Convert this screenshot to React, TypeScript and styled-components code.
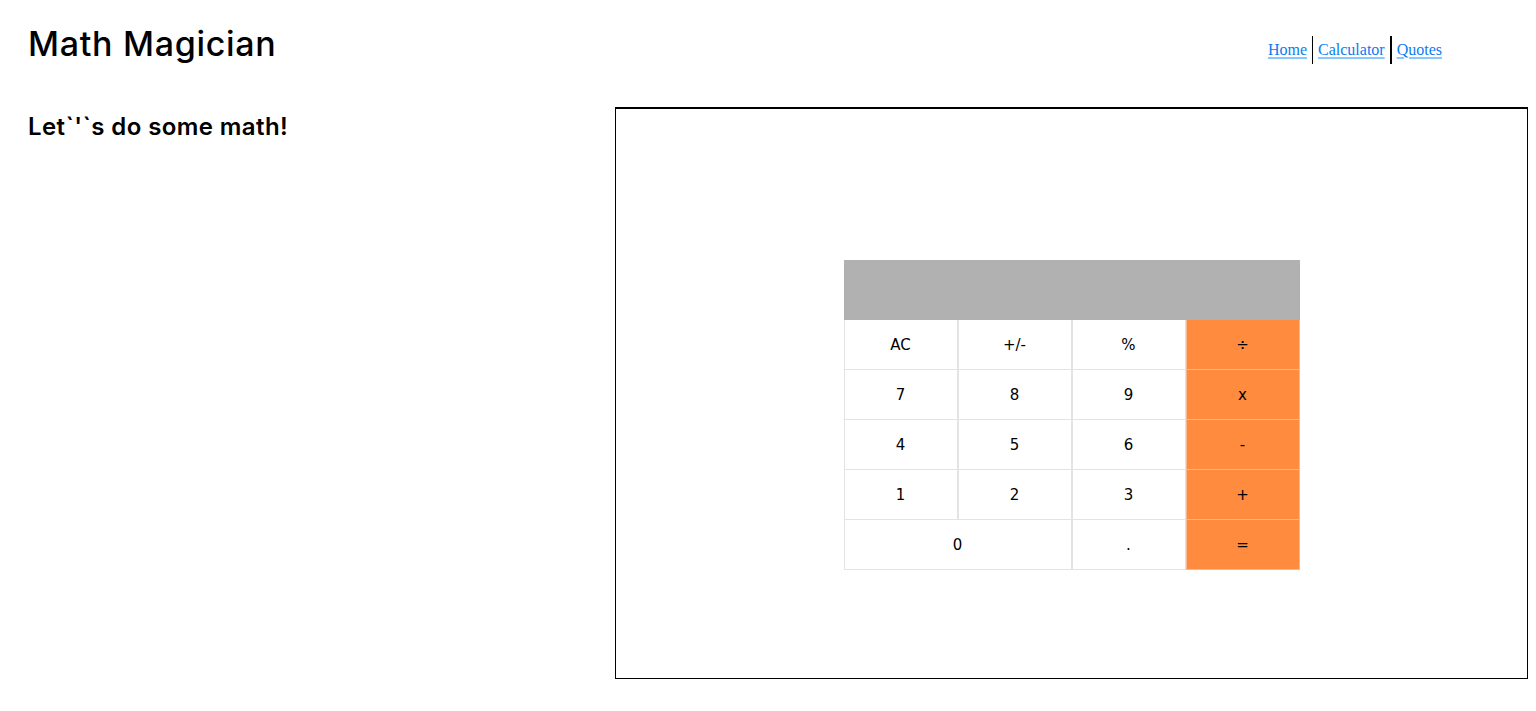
import React from "react";
import styled, { createGlobalStyle } from "styled-components";

const GlobalStyle = createGlobalStyle`
  body {
    margin: 8px;
    background: #fff;
  }
`;

const Page = styled.div`
  padding: 0 0 0 20px;
`;

const Header = styled.header`
  display: flex;
  justify-content: space-between;
  align-items: flex-start;
`;

const Title = styled.h1`
  margin: 16px 0 0;
  font-family: "Inter", "Open Sans", sans-serif;
  font-weight: 500;
  font-size: 34px;
  line-height: 40px;
  letter-spacing: 0.7px;
  color: #000;
`;

const Nav = styled.nav`
  display: flex;
  align-items: stretch;
  margin: 28px 81px 0 0;
`;

const NavLink = styled.a<{ $sep?: number }>`
  display: flex;
  align-items: center;
  padding: 0 5px;
  height: 28px;
  font-family: "Liberation Serif", serif;
  font-size: 16px;
  color: #0a7cf0;
  text-decoration: underline;
  text-decoration-color: #8cc6ff;
  text-decoration-thickness: 2px;
  text-underline-offset: 2px;
  border-left: ${(p) => (p.$sep ? `${p.$sep}px solid #000` : "none")};
`;

const Main = styled.main`
  display: flex;
  margin-top: 43px;
`;

const Intro = styled.section`
  width: 587px;
  flex-shrink: 0;
`;

const Heading = styled.h2`
  margin: 5px 0 0;
  font-family: "Inter", "Open Sans", sans-serif;
  font-weight: 600;
  font-size: 24px;
  line-height: 30px;
  letter-spacing: 0.4px;
  color: #000;
`;

const Frame = styled.section`
  width: 914px;
  height: 572px;
  flex-shrink: 0;
  box-sizing: border-box;
  border-style: solid;
  border-color: #000;
  border-width: 2px 2px 1px 1px;
  display: flex;
  justify-content: center;
  align-items: flex-start;
  padding-top: 151px;
`;

const Calculator = styled.div`
  width: 456px;
  display: grid;
  grid-template-columns: repeat(4, 1fr);
`;

const Display = styled.div`
  grid-column: 1 / -1;
  height: 60px;
  background: #b1b1b1;
`;

const Key = styled.button<{ $op?: boolean; $span?: number }>`
  grid-column: span ${(p) => p.$span ?? 1};
  height: 50px;
  margin: 0;
  padding: 0;
  border: 1px solid ${(p) => (p.$op ? "#f5b88f" : "#e3e3e3")};
  border-width: 0 1px 1px 1px;
  background: ${(p) => (p.$op ? "#ff8b3e" : "#fff")};
  font-family: "DejaVu Sans", "Verdana", sans-serif;
  font-size: 15px;
  color: #000;
  cursor: pointer;
`;

const keys: { label: string; op?: boolean; span?: number }[] = [
  { label: "AC" },
  { label: "+/-" },
  { label: "%" },
  { label: "÷", op: true },
  { label: "7" },
  { label: "8" },
  { label: "9" },
  { label: "x", op: true },
  { label: "4" },
  { label: "5" },
  { label: "6" },
  { label: "-", op: true },
  { label: "1" },
  { label: "2" },
  { label: "3" },
  { label: "+", op: true },
  { label: "0", span: 2 },
  { label: "." },
  { label: "=", op: true },
];

export default function App() {
  return (
    <>
      <GlobalStyle />
      <Page>
        <Header>
          <Title>Math Magician</Title>
          <Nav>
            <NavLink href="#">Home</NavLink>
            <NavLink href="#" $sep={1}>
              Calculator
            </NavLink>
            <NavLink href="#" $sep={2}>
              Quotes
            </NavLink>
          </Nav>
        </Header>
        <Main>
          <Intro>
            <Heading>Let`'`s do some math!</Heading>
          </Intro>
          <Frame>
            <Calculator>
              <Display />
              {keys.map((k) => (
                <Key key={k.label} $op={k.op} $span={k.span}>
                  {k.label}
                </Key>
              ))}
            </Calculator>
          </Frame>
        </Main>
      </Page>
    </>
  );
}
